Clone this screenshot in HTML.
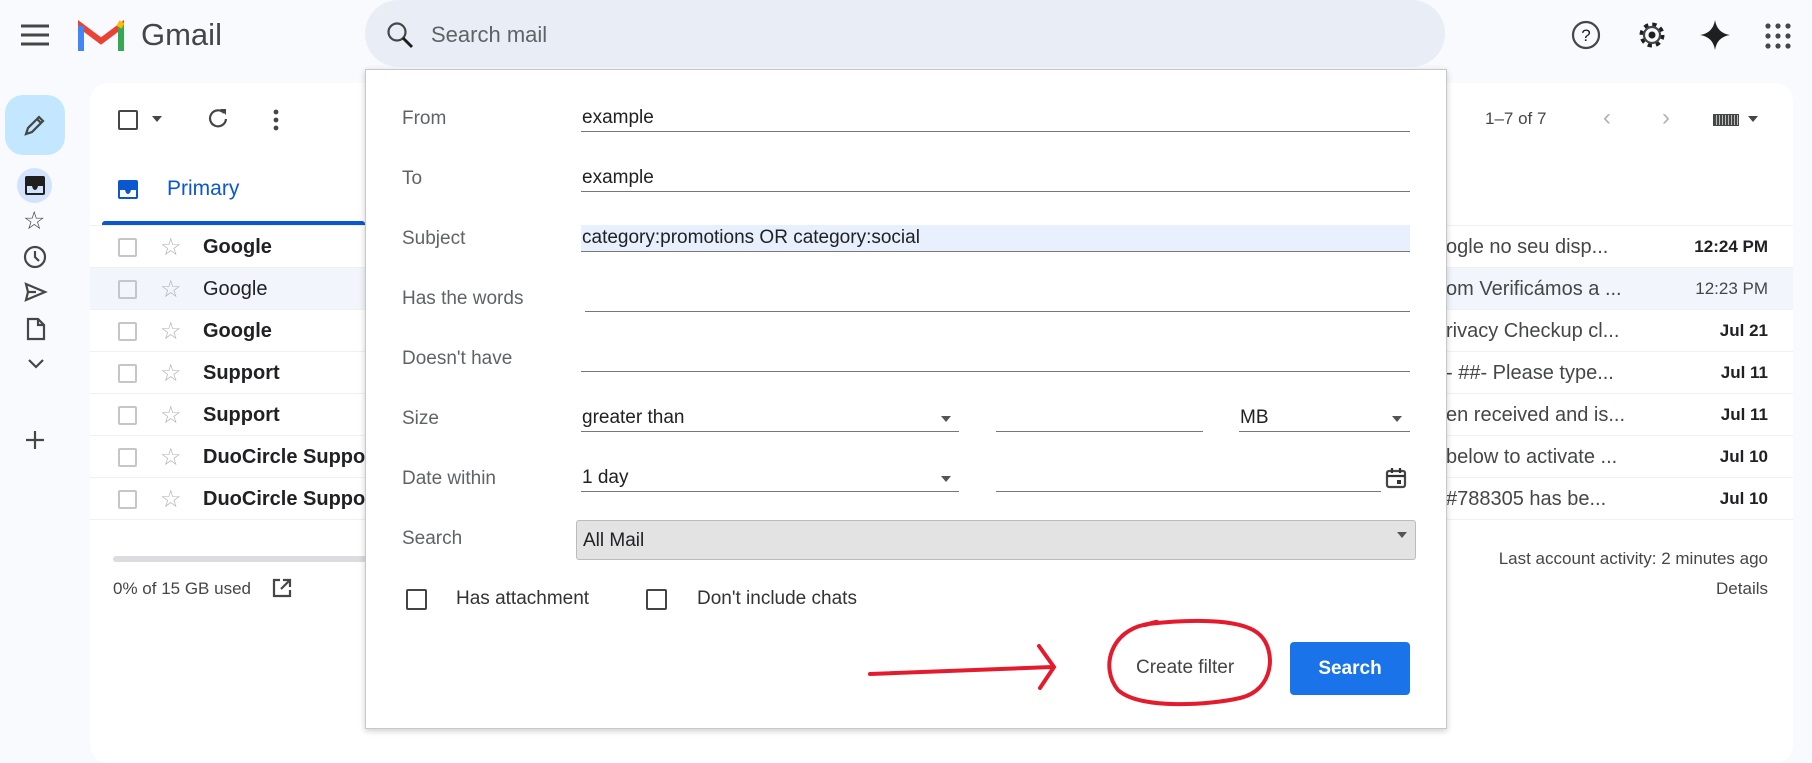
<!DOCTYPE html><html><head><meta charset="utf-8"><style>
*{box-sizing:border-box;margin:0;padding:0}
body{width:1812px;height:747px;overflow:hidden;background:#f8fafd;font-family:"Liberation Sans",Arial,sans-serif;position:relative;color:#202124}
.a{position:absolute}
.main{left:90px;top:83px;width:1703px;height:680px;background:#fff;border-radius:18px}
.row{position:absolute;left:90px;width:1703px;height:42px;border-bottom:1px solid #eef0f3;font-size:20px}
.row .cb{position:absolute;left:28px;top:12px;width:19px;height:19px;border:2px solid #c4c7c5;border-radius:2px}
.row .st{position:absolute;left:70px;top:7px;color:#b0b3b6;font-size:24px}
.row .s{position:absolute;left:113px;top:10px}
.row .sn{position:absolute;left:1356px;top:10px;color:#444746}
.row .d{position:absolute;right:25px;top:11px;font-size:17px}
.b{font-weight:bold}
.lbl{position:absolute;left:402px;font-size:19px;color:#5f6368}
.inp{position:absolute;height:27px;border-bottom:1px solid #777;font-size:19px;padding-left:1px;line-height:26px}
.dd:after{content:"";position:absolute;right:8px;top:11px;border:5px solid transparent;border-top:6px solid #555}
.ic{stroke:#444746;fill:none;stroke-width:2.2}
</style></head><body>
<!-- top bar -->
<svg class="a" style="left:21px;top:24px" width="28" height="22"><path d="M0 2h28M0 11h28M0 20h28" stroke="#444746" stroke-width="3"/></svg>
<svg class="a" style="left:78px;top:18px" width="46" height="35" viewBox="0 0 46 35"><path d="M3 33V8l20 15L43 8v25" fill="none" stroke="#ea4335" stroke-width="6"/><path d="M3 33V8" stroke="#4285f4" stroke-width="6"/><path d="M43 33V8" stroke="#34a853" stroke-width="6"/><path d="M40 5l5 3" stroke="#fbbc04" stroke-width="6"/></svg>
<div class="a" style="left:141px;top:17px;font-size:31px;color:#444746">Gmail</div>
<div class="a" style="left:365px;top:0;width:1080px;height:67px;background:#e9eef6;border-radius:34px"></div>
<svg class="a" style="left:385px;top:20px" width="30" height="30"><circle cx="12" cy="12" r="8.5" class="ic" stroke="#1f1f1f" stroke-width="2.6"/><path d="M18 18l9 9" stroke="#1f1f1f" stroke-width="3"/></svg>
<div class="a" style="left:431px;top:22px;font-size:22px;color:#5f6368">Search mail</div>
<svg class="a" style="left:1570px;top:19px" width="32" height="32"><circle cx="16" cy="16" r="13" class="ic" stroke="#1f1f1f"/><text x="16" y="22" font-size="17" text-anchor="middle" fill="#1f1f1f" font-family="Liberation Sans">?</text></svg>
<svg class="a" style="left:1636px;top:19px" width="32" height="32"><circle cx="16" cy="16" r="10" fill="none" stroke="#1f1f1f" stroke-width="5" stroke-dasharray="4 3.85"/><circle cx="16" cy="16" r="8" class="ic" stroke="#1f1f1f"/><circle cx="16" cy="16" r="3.5" fill="#1f1f1f"/></svg>
<svg class="a" style="left:1699px;top:19px" width="32" height="32"><path d="M16 1Q18 14 31 16Q18 18 16 31Q14 18 1 16Q14 14 16 1Z" fill="#1f1f1f"/></svg>
<svg class="a" style="left:1765px;top:23px" width="26" height="26" fill="#444746"><circle cx="3" cy="3" r="2.6"/><circle cx="13" cy="3" r="2.6"/><circle cx="23" cy="3" r="2.6"/><circle cx="3" cy="13" r="2.6"/><circle cx="13" cy="13" r="2.6"/><circle cx="23" cy="13" r="2.6"/><circle cx="3" cy="23" r="2.6"/><circle cx="13" cy="23" r="2.6"/><circle cx="23" cy="23" r="2.6"/></svg>
<!-- left nav -->
<div class="a" style="left:5px;top:95px;width:60px;height:60px;background:#c2e7ff;border-radius:18px"></div>
<svg class="a" style="left:23px;top:113px" width="24" height="24"><path d="M3 21l2-6L16 4l4 4L9 19z M14 6l4 4" class="ic" stroke="#001d35"/></svg>
<div class="a" style="left:17px;top:168px;width:35px;height:35px;background:#d3e3fd;border-radius:50%"></div>
<svg class="a" style="left:24px;top:175px" width="22" height="21"><rect x="1" y="1" width="20" height="19" rx="2" fill="#1f1f1f"/><path d="M3 11h5q1 4 3 4t3-4h5v7H3z" fill="#d3e3fd"/></svg>
<div class="a" style="left:23px;top:206px;font-size:25px;color:#444746">☆</div>
<svg class="a" style="left:23px;top:245px" width="24" height="24"><circle cx="12" cy="12" r="10" class="ic"/><path d="M12 6v6l4 4" class="ic"/></svg>
<svg class="a" style="left:24px;top:282px" width="24" height="20"><path d="M2 2l19 8-19 8 2-8z M4 10h8" class="ic"/></svg>
<svg class="a" style="left:26px;top:317px" width="20" height="24"><path d="M2 2h10l6 6v14H2z M12 2v6h6" class="ic"/></svg>
<svg class="a" style="left:27px;top:358px" width="18" height="12"><path d="M2 2l7 7 7-7" class="ic"/></svg>
<svg class="a" style="left:25px;top:430px" width="20" height="20"><path d="M10 1v18M1 10h18" class="ic"/></svg>
<!-- main -->
<div class="a main"></div>
<div class="a" style="left:118px;top:110px;width:20px;height:20px;border:2px solid #444746;border-radius:2px"></div>
<div class="a" style="left:152px;top:116px;border:5px solid transparent;border-top:6px solid #444746"></div>
<svg class="a" style="left:206px;top:107px" width="24" height="24"><path d="M18 6A8 8 0 1 0 20 12" class="ic"/><path d="M14 2h6v6" fill="#444746"/></svg>
<svg class="a" style="left:272px;top:109px" width="8" height="22" fill="#444746"><circle cx="4" cy="3" r="2.4"/><circle cx="4" cy="11" r="2.4"/><circle cx="4" cy="19" r="2.4"/></svg>
<svg class="a" style="left:117px;top:179px" width="22" height="21"><rect x="1" y="1" width="20" height="19" rx="2" fill="#0b57d0"/><path d="M3 11h5q1 4 3 4t3-4h5v7H3z" fill="#fff"/></svg>
<div class="a" style="left:167px;top:177px;font-size:21px;color:#0b57d0">Primary</div>
<div class="a" style="left:102px;top:221px;width:263px;height:4px;background:#0b57d0;border-radius:3px 3px 0 0"></div>
<div class="a" style="left:90px;top:225px;width:1703px;height:1px;background:#eef0f3"></div>
<div class="a" style="left:1485px;top:109px;font-size:17px;color:#444746">1–7 of 7</div>
<div class="a" style="left:1603px;top:104px;font-size:24px;color:#b0b3b6">‹</div>
<div class="a" style="left:1662px;top:104px;font-size:24px;color:#b0b3b6">›</div>
<div class="a" style="left:1713px;top:114px;width:26px;height:12px;background:#444746;border:1px solid #444746;background-image:repeating-linear-gradient(90deg,#444746 0 2px,#bbb 2px 3px)"></div>
<div class="a" style="left:1748px;top:116px;border:5px solid transparent;border-top:6px solid #444746"></div>

<div class="row" style="top:226px"><div class="cb"></div><div class="st">☆</div><div class="s b">Google</div><div class="sn">ogle no seu disp...</div><div class="d b">12:24 PM</div></div>
<div class="row" style="top:268px;background:#f2f6fc"><div class="cb"></div><div class="st">☆</div><div class="s">Google</div><div class="sn">om Verificámos a ...</div><div class="d" style="color:#444746">12:23 PM</div></div>
<div class="row" style="top:310px"><div class="cb"></div><div class="st">☆</div><div class="s b">Google</div><div class="sn">rivacy Checkup cl...</div><div class="d b">Jul 21</div></div>
<div class="row" style="top:352px"><div class="cb"></div><div class="st">☆</div><div class="s b">Support</div><div class="sn">- ##- Please type...</div><div class="d b">Jul 11</div></div>
<div class="row" style="top:394px"><div class="cb"></div><div class="st">☆</div><div class="s b">Support</div><div class="sn">en received and is...</div><div class="d b">Jul 11</div></div>
<div class="row" style="top:436px"><div class="cb"></div><div class="st">☆</div><div class="s b">DuoCircle Support</div><div class="sn">below to activate ...</div><div class="d b">Jul 10</div></div>
<div class="row" style="top:478px"><div class="cb"></div><div class="st">☆</div><div class="s b">DuoCircle Support</div><div class="sn">#788305 has be...</div><div class="d b">Jul 10</div></div>
<div class="a" style="left:113px;top:556px;width:260px;height:6px;background:#dadce0;border-radius:3px"></div>
<div class="a" style="left:113px;top:579px;font-size:17px;color:#444746">0% of 15 GB used</div>
<svg class="a" style="left:271px;top:577px" width="22" height="22"><path d="M9 3H3v16h16v-6 M12 3h7v7 M19 3l-9 9" class="ic"/></svg>
<div class="a" style="right:44px;top:549px;font-size:17px;color:#444746">Last account activity: 2 minutes ago</div>
<div class="a" style="right:44px;top:579px;font-size:17px;color:#444746">Details</div>

<!-- dialog -->
<div class="a" style="left:365px;top:69px;width:1082px;height:660px;background:#fff;border:1px solid #c8c8c8;box-shadow:0 2px 6px rgba(0,0,0,.2)"></div>
<div class="lbl" style="top:108px">From</div><div class="inp" style="left:581px;top:105px;width:829px">example</div>
<div class="lbl" style="top:168px">To</div><div class="inp" style="left:581px;top:165px;width:829px">example</div>
<div class="lbl" style="top:228px">Subject</div><div class="inp" style="left:581px;top:225px;width:829px;background:#e8f0fe">category:promotions OR category:social</div>
<div class="lbl" style="top:288px">Has the words</div><div class="inp" style="left:585px;top:285px;width:825px"></div>
<div class="lbl" style="top:348px">Doesn't have</div><div class="inp" style="left:581px;top:345px;width:829px"></div>
<div class="lbl" style="top:408px">Size</div>
<div class="inp dd" style="left:581px;top:405px;width:378px">greater than</div>
<div class="inp" style="left:996px;top:405px;width:207px"></div>
<div class="inp dd" style="left:1239px;top:405px;width:171px;padding-left:1px">MB</div>
<div class="lbl" style="top:468px">Date within</div>
<div class="inp dd" style="left:581px;top:465px;width:378px">1 day</div>
<div class="inp" style="left:996px;top:465px;width:385px"></div>
<svg class="a" style="left:1385px;top:467px" width="22" height="22"><rect x="2" y="4" width="18" height="16" rx="2" class="ic" stroke="#333"/><path d="M2 9h18M7 1v5M15 1v5" stroke="#333" stroke-width="2.2"/><rect x="12" y="13" width="4" height="4" fill="#333"/></svg>
<div class="lbl" style="top:528px">Search</div>
<div class="a dd" style="left:576px;top:520px;width:840px;height:40px;background:#e3e3e3;border:1px solid #bbb;border-radius:3px;font-size:19px;padding:9px 6px"><span>All Mail</span></div>
<div class="a" style="left:406px;top:589px;width:21px;height:21px;border:2px solid #444;border-radius:2px"></div>
<div class="a" style="left:456px;top:588px;font-size:19px;color:#333">Has attachment</div>
<div class="a" style="left:646px;top:589px;width:21px;height:21px;border:2px solid #444;border-radius:2px"></div>
<div class="a" style="left:697px;top:588px;font-size:19px;color:#333">Don't include chats</div>
<div class="a" style="left:1136px;top:657px;font-size:19px;color:#444">Create filter</div>
<div class="a" style="left:1290px;top:642px;width:120px;height:53px;background:#1a73e8;border-radius:4px;color:#fff;font-size:19px;font-weight:bold;text-align:center;line-height:53px">Search</div>
<!-- annotation -->
<svg class="a" style="left:0;top:0" width="1812" height="747"><g fill="none" stroke="#e31b2c" stroke-width="4" stroke-linecap="round"><path d="M870 674L1052 667M1039 646L1054 667 1040 688"/><path d="M1148 624C1110 630 1100 668 1118 690C1140 710 1210 705 1240 698C1275 690 1276 650 1260 635C1245 620 1200 618 1148 624C1155 622 1165 620 1145 625"/></g></svg>
</body></html>
